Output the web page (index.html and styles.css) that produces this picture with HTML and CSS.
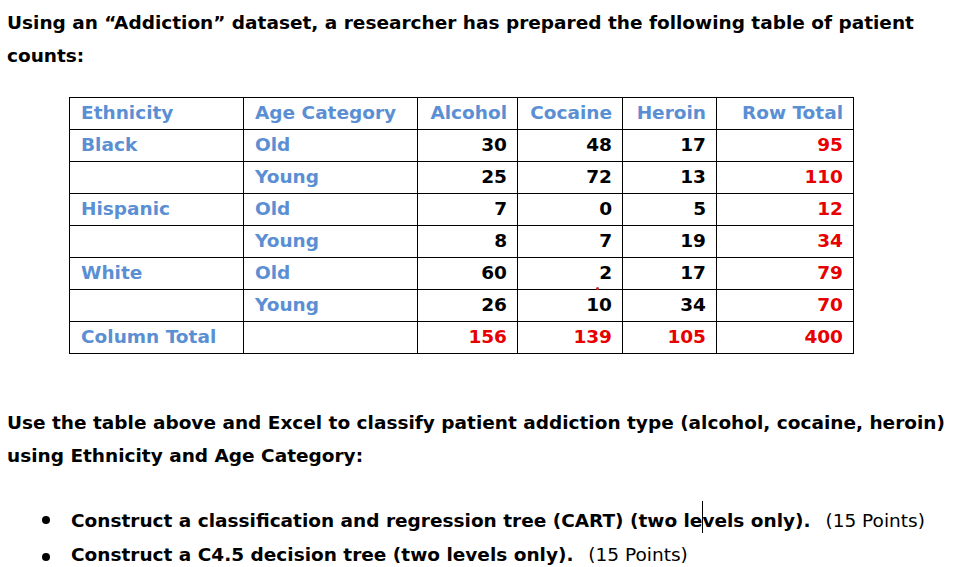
FILE: index.html
```html
<!DOCTYPE html>
<html lang="en">
<head>
<meta charset="utf-8">
<title>Addiction dataset</title>
<link rel="stylesheet" href="styles.css">
</head>
<body>
<p class="para intro">Using an “Addiction” dataset, a researcher has prepared the following table of patient<br>counts:</p>

<table class="counts">
  <colgroup>
    <col class="c-eth"><col class="c-age"><col class="c-alc"><col class="c-coc"><col class="c-her"><col class="c-tot">
  </colgroup>
  <tbody>
    <tr>
      <td class="lbl">Ethnicity</td><td class="lbl">Age Category</td>
      <td class="lbl num">Alcohol</td><td class="lbl num">Cocaine</td><td class="lbl num">Heroin</td><td class="lbl num">Row Total</td>
    </tr>
    <tr>
      <td class="lbl">Black</td><td class="lbl">Old</td>
      <td class="num">30</td><td class="num">48</td><td class="num">17</td><td class="num red">95</td>
    </tr>
    <tr>
      <td></td><td class="lbl">Young</td>
      <td class="num">25</td><td class="num">72</td><td class="num">13</td><td class="num red">110</td>
    </tr>
    <tr>
      <td class="lbl">Hispanic</td><td class="lbl">Old</td>
      <td class="num">7</td><td class="num">0</td><td class="num">5</td><td class="num red">12</td>
    </tr>
    <tr>
      <td></td><td class="lbl">Young</td>
      <td class="num">8</td><td class="num">7</td><td class="num">19</td><td class="num red">34</td>
    </tr>
    <tr>
      <td class="lbl">White</td><td class="lbl">Old</td>
      <td class="num">60</td><td class="num mark-cell">2<span class="mark"></span></td><td class="num">17</td><td class="num red">79</td>
    </tr>
    <tr>
      <td></td><td class="lbl">Young</td>
      <td class="num">26</td><td class="num">10</td><td class="num">34</td><td class="num red">70</td>
    </tr>
    <tr>
      <td class="lbl">Column Total</td><td></td>
      <td class="num red">156</td><td class="num red">139</td><td class="num red">105</td><td class="num red">400</td>
    </tr>
  </tbody>
</table>

<p class="para task">Use the table above and Excel to classify patient addiction type (alcohol, cocaine, heroin)<br>using Ethnicity and Age Category:</p>

<ul class="bullets">
  <li>Construct a classification and regression tree (CART) (two le<span class="caret"></span>vels only).&nbsp; <span class="pts">(15 Points)</span></li>
  <li>Construct a C4.5 decision tree (two levels only).&nbsp; <span class="pts">(15 Points)</span></li>
</ul>
</body>
</html>
```

FILE: styles.css
```css
html, body {
  margin: 0;
  padding: 0;
  background: #ffffff;
}

body {
  font-family: "DejaVu Sans", Verdana, sans-serif;
  font-weight: 700;
  font-size: 18.5px;
  color: #000000;
  padding: 6px 0 0 7px;
  width: 948px;
  overflow: hidden;
}

.para {
  margin: 0;
  line-height: 33px;
  white-space: nowrap;
}

.counts {
  border-collapse: collapse;
  table-layout: fixed;
  width: 785px;
  margin: 25px 0 0 62px;
  font-size: 18.5px;
}

.c-eth { width: 174px; }
.c-age { width: 174px; }
.c-alc { width: 100px; }
.c-coc { width: 105px; }
.c-her { width: 94px; }
.c-tot { width: 137px; }

.counts td {
  border: 1px solid #000000;
  padding: 0 10px 2px 11px;
  line-height: 29px;
  white-space: nowrap;
  vertical-align: top;
}

.counts td.lbl {
  color: #5b8fd4;
}

.counts td.num {
  text-align: right;
}

.counts td.red {
  color: #e60000;
}

.mark-cell {
  position: relative;
}

.mark {
  position: absolute;
  left: 78px;
  bottom: -1px;
  width: 3px;
  height: 3px;
  border-radius: 50%;
  background: #d42020;
}

.task {
  margin-top: 52px;
}

.bullets {
  list-style: none;
  margin: 28.5px 0 0 0;
  padding: 0;
}

.bullets li {
  position: relative;
  padding-left: 64px;
  line-height: 34px;
  white-space: nowrap;
}

.bullets li::before {
  content: "";
  position: absolute;
  left: 35px;
  top: 15px;
  width: 8px;
  height: 8px;
  border-radius: 50%;
  background: #000000;
}

.pts {
  font-weight: 400;
  margin-left: 2px;
}

.caret {
  display: inline-block;
  width: 0;
  height: 32px;
  border-left: 1px solid #000000;
  vertical-align: -6px;
  margin: 0 -0.5px;
}
```
